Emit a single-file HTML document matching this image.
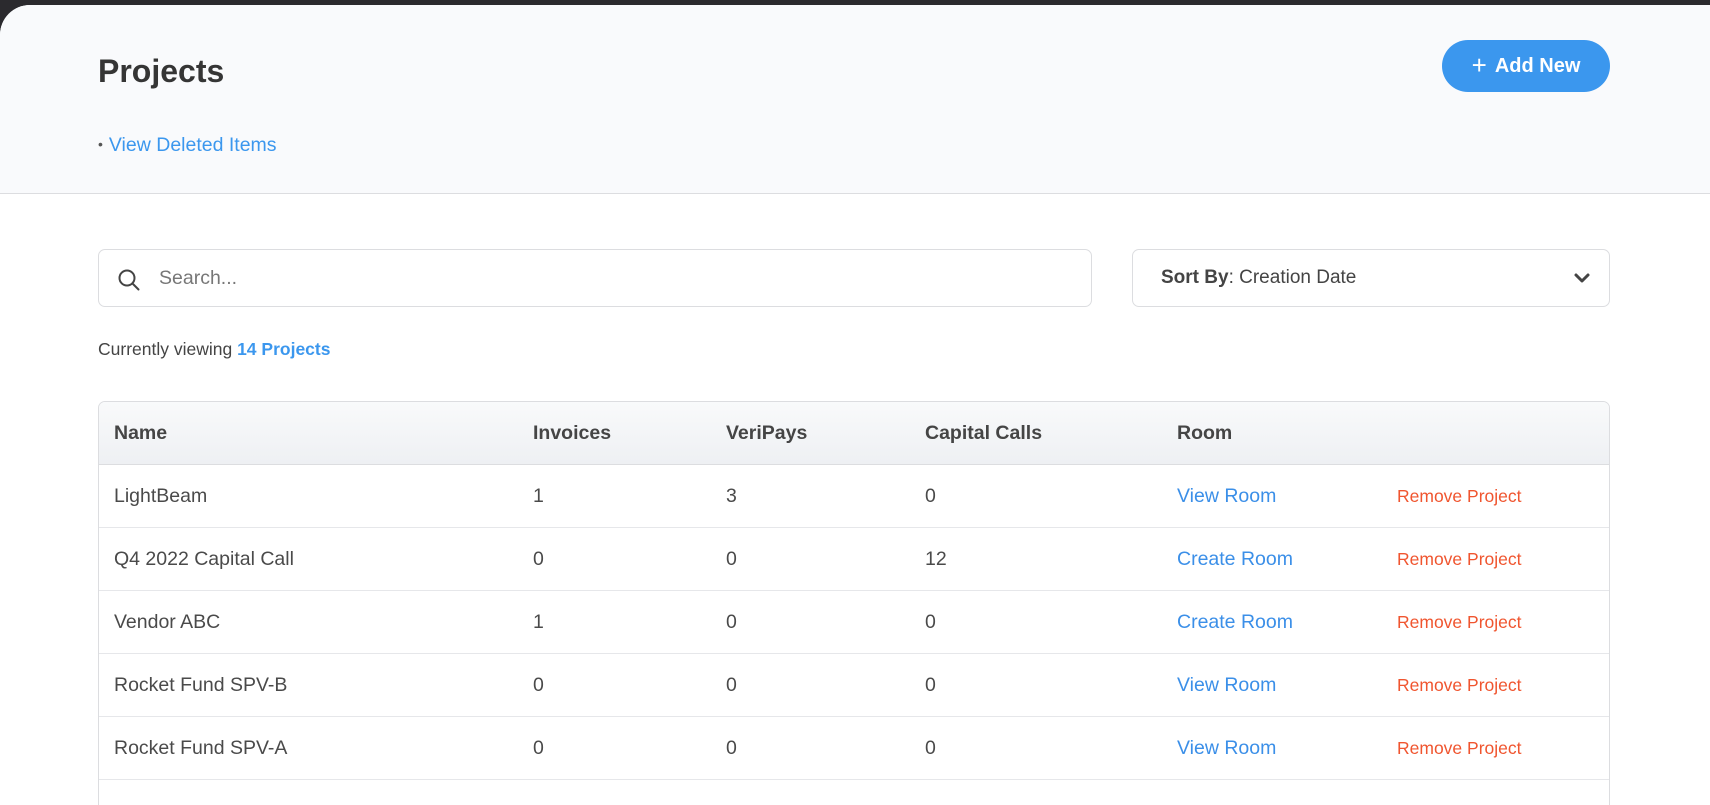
<!DOCTYPE html>
<html><head><meta charset="utf-8"><style>
*{margin:0;padding:0;box-sizing:border-box}
body{width:1710px;height:776px;overflow:hidden;background:#2b2a2e;font-family:"Liberation Sans",sans-serif;color:#444}
.page{position:absolute;left:0;top:5px;width:1710px;height:800px;background:#fff;border-top-left-radius:30px;overflow:hidden}
.hdr{position:absolute;left:0;top:0;width:1710px;height:189px;background:#f9fafc;border-bottom:1px solid #dcdde0}
.a{position:absolute;white-space:nowrap}
.btn{position:absolute;left:1442px;top:35px;width:168px;height:52px;border-radius:26px;background:#3b97ee;color:#fff;font-weight:bold;font-size:20px;line-height:46px;text-align:center}
.box{position:absolute;top:244px;height:58px;border:1px solid #dcdde0;border-radius:7px;background:#fff}
.tbl{position:absolute;left:98px;top:396px;width:1512px;height:420px;border:1px solid #dcdde0;border-radius:7px;overflow:hidden}
.th{position:absolute;left:0;top:0;width:100%;height:63px;background:linear-gradient(#f9fafb,#eef0f3);border-bottom:1px solid #dcdde0}
.row{position:absolute;left:0;width:100%;height:63px;border-bottom:1px solid #e6e7ea;font-size:19.5px;color:#4a4a4a}
.row span,.th span{position:absolute;top:0;line-height:63px}
.th span{font-weight:bold;font-size:19.5px;color:#454545}
.bl{color:#3b8fe8}.rd{color:#f0552f;font-size:17.5px}
</style></head><body><div class="page">
<div class="hdr">
<div class="a" style="left:98px;top:48px;font-size:32px;font-weight:bold;color:#353535">Projects</div>
<div class="a" style="left:98px;top:129px;font-size:19.5px;color:#3b97ee"><span style="color:#555;font-size:14px;position:relative;top:-2px;margin-right:6px">•</span>View Deleted Items</div>
<div class="btn"><span style="font-weight:normal;font-size:26px;position:relative;top:2px;margin-right:8px">+</span>Add New</div>
</div>
<div class="box" style="left:98px;width:994px">
<svg style="position:absolute;left:18px;top:18px" width="24" height="24" viewBox="0 0 24 24" fill="none" stroke="#444" stroke-width="2"><circle cx="10" cy="10" r="7.5"/><path d="M15.5 15.5l6 6" stroke-linecap="round"/></svg>
<div class="a" style="left:60px;top:17px;font-size:19.5px;color:#777">Search...</div>
</div>
<div class="box" style="left:1132px;width:478px">
<div class="a" style="left:28px;top:17px;font-size:19px;color:#444"><b>Sort By</b>: Creation Date</div>
<svg style="position:absolute;left:440px;top:22px" width="18" height="14" viewBox="0 0 18 14" fill="none" stroke="#444" stroke-width="3" stroke-linecap="round" stroke-linejoin="round"><path d="M3 3l6 6 6-6"/></svg>
</div>
<div class="a" style="left:98px;top:334px;font-size:17.5px;color:#444">Currently viewing <b style="color:#3b97ee">14 Projects</b></div>
<div class="tbl">
<div class="th"><span style="left:15px">Name</span><span style="left:434px">Invoices</span><span style="left:627px">VeriPays</span><span style="left:826px">Capital Calls</span><span style="left:1078px">Room</span></div>
<div class="row" style="top:63px"><span style="left:15px">LightBeam</span><span style="left:434px">1</span><span style="left:627px">3</span><span style="left:826px">0</span><span class="bl" style="left:1078px">View Room</span><span class="rd" style="left:1298px">Remove Project</span></div>
<div class="row" style="top:126px"><span style="left:15px">Q4 2022 Capital Call</span><span style="left:434px">0</span><span style="left:627px">0</span><span style="left:826px">12</span><span class="bl" style="left:1078px">Create Room</span><span class="rd" style="left:1298px">Remove Project</span></div>
<div class="row" style="top:189px"><span style="left:15px">Vendor ABC</span><span style="left:434px">1</span><span style="left:627px">0</span><span style="left:826px">0</span><span class="bl" style="left:1078px">Create Room</span><span class="rd" style="left:1298px">Remove Project</span></div>
<div class="row" style="top:252px"><span style="left:15px">Rocket Fund SPV-B</span><span style="left:434px">0</span><span style="left:627px">0</span><span style="left:826px">0</span><span class="bl" style="left:1078px">View Room</span><span class="rd" style="left:1298px">Remove Project</span></div>
<div class="row" style="top:315px"><span style="left:15px">Rocket Fund SPV-A</span><span style="left:434px">0</span><span style="left:627px">0</span><span style="left:826px">0</span><span class="bl" style="left:1078px">View Room</span><span class="rd" style="left:1298px">Remove Project</span></div>
</div>
</div></body></html>
